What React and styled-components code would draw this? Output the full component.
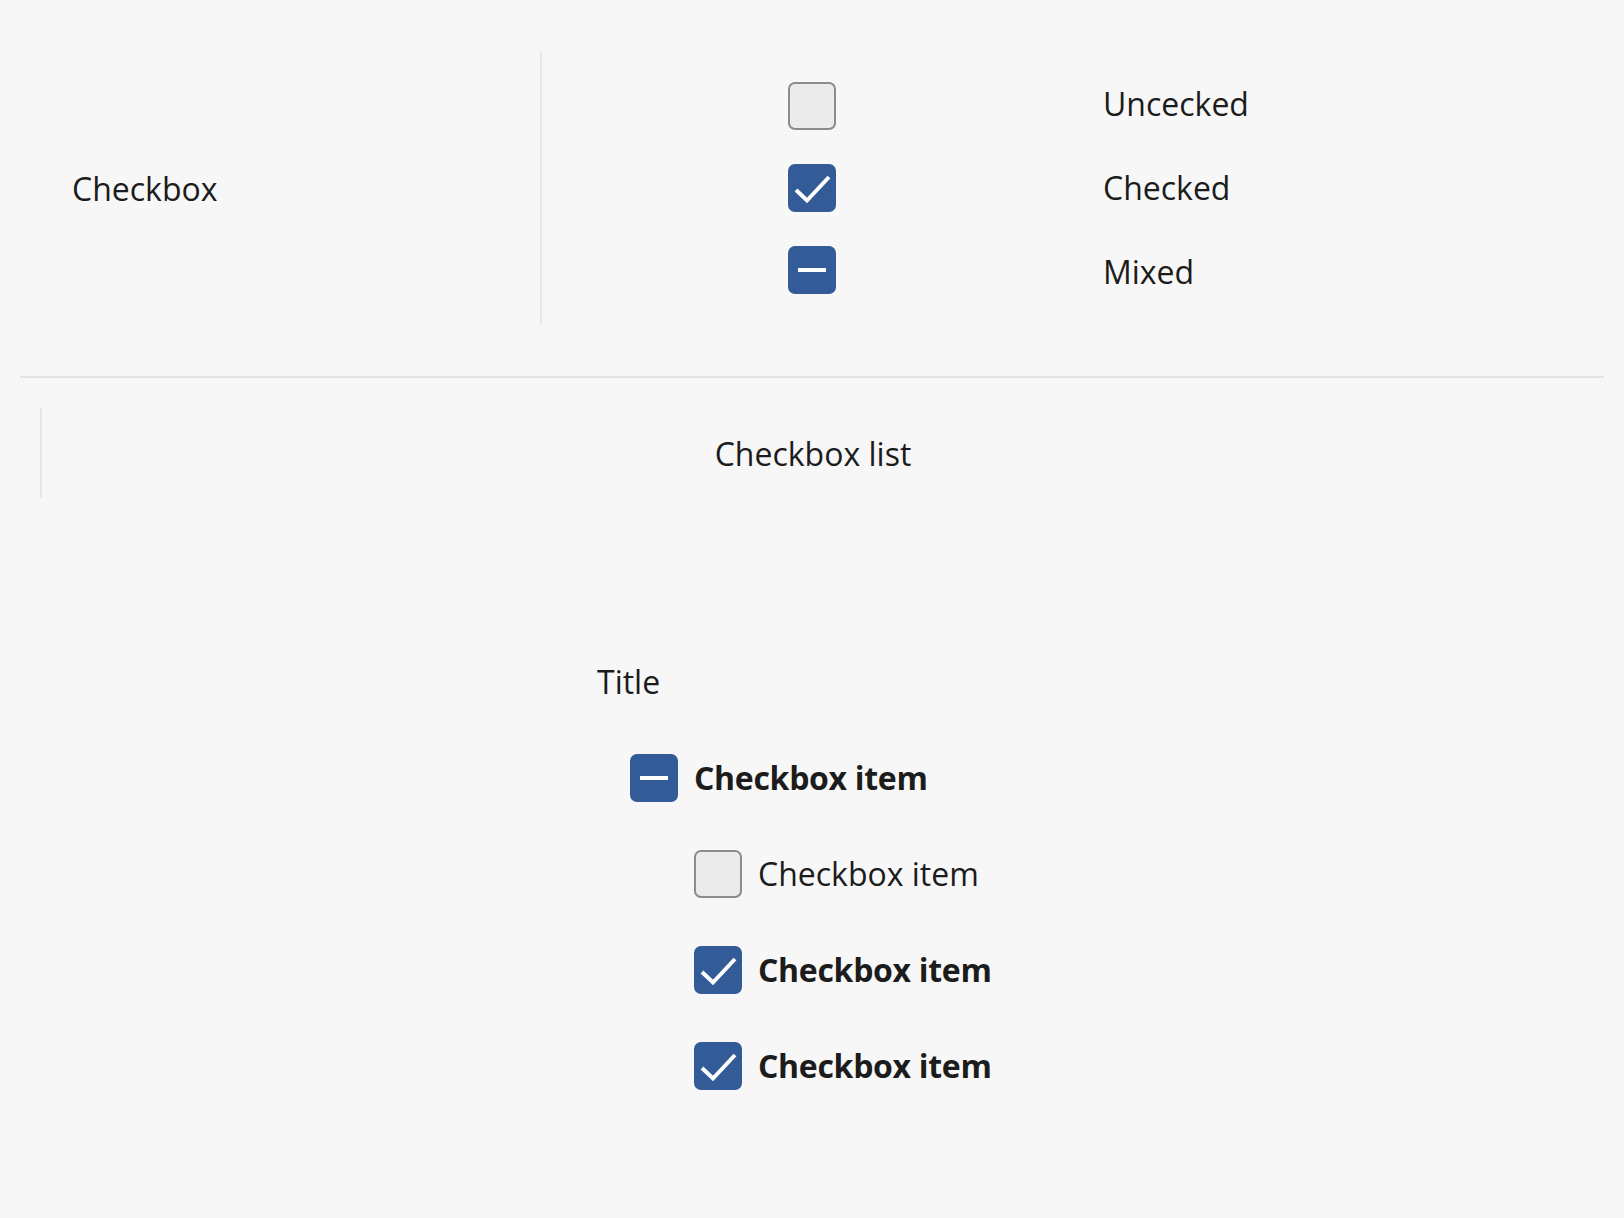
import styled, { createGlobalStyle } from 'styled-components'

const GlobalStyle = createGlobalStyle`
  body {
    margin: 0;
    background: #f7f7f7;
    font-family: "Open Sans", "Noto Sans", sans-serif;
    color: #1c1c1c;
  }
`

const Page = styled.div`
  width: 1624px;
  min-height: 1218px;
`

const TopRow = styled.div`
  display: flex;
  margin-top: 52px;
`

const NameCell = styled.div`
  width: 542px;
  box-sizing: border-box;
  padding-left: 72px;
  display: flex;
  align-items: center;
  font-size: 32px;
  border-right: 2px solid #e8e8e8;
`

const StateTable = styled.div`
  flex: 1;
  display: flex;
  align-items: center;
  gap: 267px;
  padding: 30px 0 30px 246px;
`

const Column = styled.div`
  display: flex;
  flex-direction: column;
  gap: ${p => p.$gap}px;
  font-size: 32px;
  line-height: 44px;
`

const Box = styled.span`
  width: 48px;
  height: 48px;
  flex: none;
  box-sizing: border-box;
  border-radius: 7px;
  display: flex;
  align-items: center;
  justify-content: center;
  background: ${p => (p.$state === 'off' ? '#ebebeb' : '#325b98')};
  border: ${p => (p.$state === 'off' ? '2px solid #8c8c8c' : 'none')};
`

const Rule = styled.div`
  height: 2px;
  margin: 52px 20px 0;
  background: #e2e2e2;
`

const ListHeader = styled.div`
  margin: 30px 40px 0;
  height: 90px;
  border-left: 2px solid #e6e6e6;
  display: flex;
  align-items: center;
  justify-content: center;
  font-size: 32px;
`

const Group = styled.div`
  margin-top: 162px;
  padding-left: 597px;
`

const GroupTitle = styled.div`
  font-size: 32px;
  line-height: 44px;
`

const Items = styled.div`
  display: flex;
  flex-direction: column;
  gap: 48px;
  margin-top: 50px;
  padding-left: 33px;
`

const Item = styled.div`
  display: flex;
  align-items: center;
  gap: 16px;
  padding-left: ${p => (p.$child ? '64px' : '0')};
  font-size: 32px;
  line-height: 44px;
  font-weight: ${p => (p.$bold ? 700 : 400)};
  letter-spacing: ${p => (p.$bold ? '-0.3px' : '0')};
`

const Checkbox = ({ state }) => (
  <Box $state={state}>
    {state === 'on' && (
      <svg width="48" height="48" viewBox="0 0 48 48">
        <path d="M8 26 L19 36.5 L41 13" fill="none" stroke="#fff" strokeWidth="4" />
      </svg>
    )}
    {state === 'mixed' && (
      <svg width="48" height="48" viewBox="0 0 48 48">
        <rect x="10" y="22" width="28" height="4" fill="#fff" />
      </svg>
    )}
  </Box>
)

const App = () => {
  return (
    <Page>
      <GlobalStyle />
      <TopRow>
        <NameCell>Checkbox</NameCell>
        <StateTable>
          <Column $gap={34}>
            <Checkbox state="off" />
            <Checkbox state="on" />
            <Checkbox state="mixed" />
          </Column>
          <Column $gap={40}>
            <span>Uncecked</span>
            <span>Checked</span>
            <span>Mixed</span>
          </Column>
        </StateTable>
      </TopRow>
      <Rule />
      <ListHeader>Checkbox list</ListHeader>
      <Group>
        <GroupTitle>Title</GroupTitle>
        <Items>
          <Item $bold><Checkbox state="mixed" />Checkbox item</Item>
          <Item $child><Checkbox state="off" />Checkbox item</Item>
          <Item $child $bold><Checkbox state="on" />Checkbox item</Item>
          <Item $child $bold><Checkbox state="on" />Checkbox item</Item>
        </Items>
      </Group>
    </Page>
  )
}

export default App
